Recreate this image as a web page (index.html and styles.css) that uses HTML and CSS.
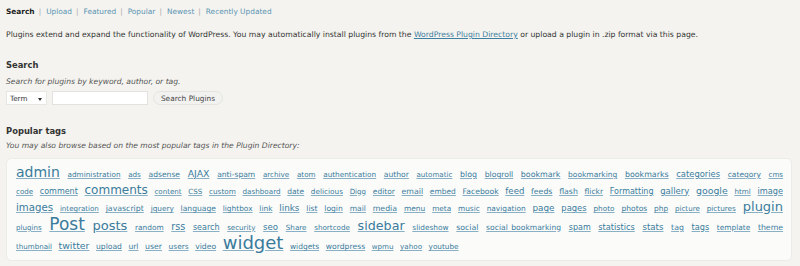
FILE: index.html
```html
<!DOCTYPE html>
<html lang="en">
<head>
<meta charset="utf-8">
<title>Install Plugins</title>
<link rel="stylesheet" href="styles.css">
</head>
<body>
<div class="wrap">
  <ul class="subsubsub">
    <li><a class="current" href="#">Search</a><span class="sep">|</span></li>
    <li><a href="#">Upload</a><span class="sep">|</span></li>
    <li><a href="#">Featured</a><span class="sep">|</span></li>
    <li><a href="#">Popular</a><span class="sep">|</span></li>
    <li><a href="#">Newest</a><span class="sep">|</span></li>
    <li><a href="#">Recently Updated</a></li>
  </ul>
  <p class="intro">Plugins extend and expand the functionality of WordPress. You may automatically install plugins from the <a class="ul" href="#">WordPress Plugin Directory</a> or upload a plugin in .zip format via this page.</p>

  <h4 class="heading">Search</h4>
  <p class="desc">Search for plugins by keyword, author, or tag.</p>
  <form class="search-form">
    <span class="select"><select><option>Term</option><option>Author</option><option>Tag</option></select></span>
    <input class="text" type="text">
    <button class="button" type="button">Search Plugins</button>
  </form>

  <h4 class="heading tags-heading">Popular tags</h4>
  <p class="desc tags-desc">You may also browse based on the most popular tags in the Plugin Directory:</p>
  <div class="tagcloud">
    <div class="tag-row">
      <a href="#" style="font-size:14px">admin</a>
      <a href="#" style="font-size:7.3px">administration</a>
      <a href="#" style="font-size:7.2px">ads</a>
      <a href="#" style="font-size:7.6px">adsense</a>
      <a href="#" style="font-size:9.4px">AJAX</a>
      <a href="#" style="font-size:7.6px">anti-spam</a>
      <a href="#" style="font-size:7.2px">archive</a>
      <a href="#" style="font-size:7.2px">atom</a>
      <a href="#" style="font-size:7.3px">authentication</a>
      <a href="#" style="font-size:7.6px">author</a>
      <a href="#" style="font-size:7.1px">automatic</a>
      <a href="#" style="font-size:7.9px">blog</a>
      <a href="#" style="font-size:7.7px">blogroll</a>
      <a href="#" style="font-size:7.9px">bookmark</a>
      <a href="#" style="font-size:7.5px">bookmarking</a>
      <a href="#" style="font-size:7.9px">bookmarks</a>
      <a href="#" style="font-size:8.4px">categories</a>
      <a href="#" style="font-size:7.5px">category</a>
      <a href="#" style="font-size:7.1px">cms</a>
    </div>
    <div class="tag-row">
      <a href="#" style="font-size:7.1px">code</a>
      <a href="#" style="font-size:8px">comment</a>
      <a href="#" style="font-size:12px">comments</a>
      <a href="#" style="font-size:7.1px">content</a>
      <a href="#" style="font-size:7.1px">CSS</a>
      <a href="#" style="font-size:7.3px">custom</a>
      <a href="#" style="font-size:7.2px">dashboard</a>
      <a href="#" style="font-size:7.5px">date</a>
      <a href="#" style="font-size:7.3px">delicious</a>
      <a href="#" style="font-size:7.1px">Digg</a>
      <a href="#" style="font-size:7.5px">editor</a>
      <a href="#" style="font-size:7.8px">email</a>
      <a href="#" style="font-size:7.5px">embed</a>
      <a href="#" style="font-size:7.7px">Facebook</a>
      <a href="#" style="font-size:8.6px">feed</a>
      <a href="#" style="font-size:7.8px">feeds</a>
      <a href="#" style="font-size:7.8px">flash</a>
      <a href="#" style="font-size:7.6px">flickr</a>
      <a href="#" style="font-size:8px">Formatting</a>
      <a href="#" style="font-size:8.5px">gallery</a>
      <a href="#" style="font-size:9.4px">google</a>
      <a href="#" style="font-size:7.2px">html</a>
      <a href="#" style="font-size:8.2px">image</a>
    </div>
    <div class="tag-row">
      <a href="#" style="font-size:10.2px">images</a>
      <a href="#" style="font-size:7.1px">integration</a>
      <a href="#" style="font-size:7.8px">javascript</a>
      <a href="#" style="font-size:7.3px">jquery</a>
      <a href="#" style="font-size:7.6px">language</a>
      <a href="#" style="font-size:7.4px">lightbox</a>
      <a href="#" style="font-size:7.4px">link</a>
      <a href="#" style="font-size:8.8px">links</a>
      <a href="#" style="font-size:7.6px">list</a>
      <a href="#" style="font-size:7.6px">login</a>
      <a href="#" style="font-size:7.6px">mail</a>
      <a href="#" style="font-size:7.8px">media</a>
      <a href="#" style="font-size:7.5px">menu</a>
      <a href="#" style="font-size:7.3px">meta</a>
      <a href="#" style="font-size:7.4px">music</a>
      <a href="#" style="font-size:7.4px">navigation</a>
      <a href="#" style="font-size:8.8px">page</a>
      <a href="#" style="font-size:8.4px">pages</a>
      <a href="#" style="font-size:7.3px">photo</a>
      <a href="#" style="font-size:7.6px">photos</a>
      <a href="#" style="font-size:7.4px">php</a>
      <a href="#" style="font-size:7.1px">picture</a>
      <a href="#" style="font-size:7.3px">pictures</a>
      <a href="#" style="font-size:13px">plugin</a>
    </div>
    <div class="tag-row">
      <a href="#" style="font-size:7.1px">plugins</a>
      <a href="#" style="font-size:17px">Post</a>
      <a href="#" style="font-size:13px">posts</a>
      <a href="#" style="font-size:7.4px">random</a>
      <a href="#" style="font-size:9.6px">rss</a>
      <a href="#" style="font-size:8px">search</a>
      <a href="#" style="font-size:7.1px">security</a>
      <a href="#" style="font-size:8.6px">seo</a>
      <a href="#" style="font-size:7.2px">Share</a>
      <a href="#" style="font-size:7.2px">shortcode</a>
      <a href="#" style="font-size:12.7px">sidebar</a>
      <a href="#" style="font-size:7.4px">slideshow</a>
      <a href="#" style="font-size:7.8px">social</a>
      <a href="#" style="font-size:7.6px">social bookmarking</a>
      <a href="#" style="font-size:8px">spam</a>
      <a href="#" style="font-size:8.2px">statistics</a>
      <a href="#" style="font-size:8.6px">stats</a>
      <a href="#" style="font-size:7.8px">tag</a>
      <a href="#" style="font-size:8.2px">tags</a>
      <a href="#" style="font-size:7.4px">template</a>
      <a href="#" style="font-size:7.8px">theme</a>
    </div>
    <div class="tag-row last">
      <a href="#" style="font-size:7.1px">thumbnail</a>
      <a href="#" style="font-size:9.4px">twitter</a>
      <a href="#" style="font-size:7.6px">upload</a>
      <a href="#" style="font-size:7.6px">url</a>
      <a href="#" style="font-size:7.8px">user</a>
      <a href="#" style="font-size:7.4px">users</a>
      <a href="#" style="font-size:7.7px">video</a>
      <a href="#" style="font-size:18px">widget</a>
      <a href="#" style="font-size:7.5px">widgets</a>
      <a href="#" style="font-size:7.7px">wordpress</a>
      <a href="#" style="font-size:7.1px">wpmu</a>
      <a href="#" style="font-size:7.2px">yahoo</a>
      <a href="#" style="font-size:7.3px">youtube</a>
    </div>
  </div>
</div>
</body>
</html>
```
FILE: styles.css
```css
html, body {
  margin: 0;
  padding: 0;
  background: #f4f3ef;
}
body {
  font-family: "DejaVu Sans", Verdana, sans-serif;
  font-size: 8px;
  color: #333333;
}
a {
  color: #3f7fa1;
  text-decoration: none;
}
.wrap {
  padding: 6px 4px 0 6px;
}
.subsubsub {
  list-style: none;
  margin: 0;
  padding: 0;
  display: flex;
  color: #aaaaaa;
  font-size: 7.4px;
  line-height: 11px;
}
.subsubsub a {
  color: #5b95b3;
}
.subsubsub a.current {
  color: #222222;
  font-weight: bold;
}
.sep {
  margin: 0 5px 0 4px;
}
.intro {
  margin: 12px 0 0;
  line-height: 11px;
  font-size: 7.7px;
}
a.ul {
  text-decoration: underline;
  color: #3f7fa1;
}
.heading {
  margin: 20px 0 0;
  font-size: 8.4px;
  font-weight: bold;
  line-height: 11px;
  color: #333333;
}
.tags-heading {
  margin-top: 21px;
}
.desc {
  margin: 5px 0 0;
  font-style: italic;
  font-size: 7.6px;
  line-height: 11px;
  color: #555555;
}
.tags-desc {
  margin-top: 3px;
}
.search-form {
  margin: 4px 0 0;
  display: flex;
  gap: 5px;
  height: 14px;
}
.select {
  position: relative;
  display: block;
  width: 41px;
  height: 14px;
}
.select::after {
  content: "";
  position: absolute;
  right: 5px;
  top: 7px;
  border-left: 2.5px solid transparent;
  border-right: 2.5px solid transparent;
  border-top: 3px solid #333333;
}
.select select {
  appearance: none;
  -webkit-appearance: none;
  width: 100%;
  height: 14px;
  margin: 0;
  padding: 0 0 0 3px;
  border: 1px solid #e6e6e2;
  border-radius: 0;
  background: #ffffff;
  font-family: "DejaVu Sans", Verdana, sans-serif;
  font-size: 7.2px;
  color: #333333;
}
.text {
  width: 96px;
  height: 14px;
  box-sizing: border-box;
  margin: 0;
  border: 1px solid #e2e2de;
  background: #ffffff;
  padding: 0;
}
.button {
  width: 70px;
  height: 14px;
  box-sizing: border-box;
  margin: 0;
  padding: 0;
  border: 1px solid #e4e4e0;
  border-radius: 7px;
  background: #f2f2f0;
  font-family: "DejaVu Sans", Verdana, sans-serif;
  font-size: 7.4px;
  color: #444444;
}
.tagcloud {
  margin: 7px 4px 4px 0;
  padding: 6px 8px 5px 9px;
  background: #fbfbfa;
  border: 1px solid #ebebe7;
  border-radius: 5px;
  line-height: 15.6px;
}
.tag-row {
  text-align: justify;
  text-align-last: justify;
  white-space: nowrap;
}
.tag-row.last {
  text-align-last: left;
}
.tagcloud a {
  text-decoration: underline;
  text-decoration-color: rgba(63, 127, 161, 0.6);
  color: #3a7b9c;
  margin-right: 4px;
}
.tagcloud a:last-child {
  margin-right: 0;
}
```
